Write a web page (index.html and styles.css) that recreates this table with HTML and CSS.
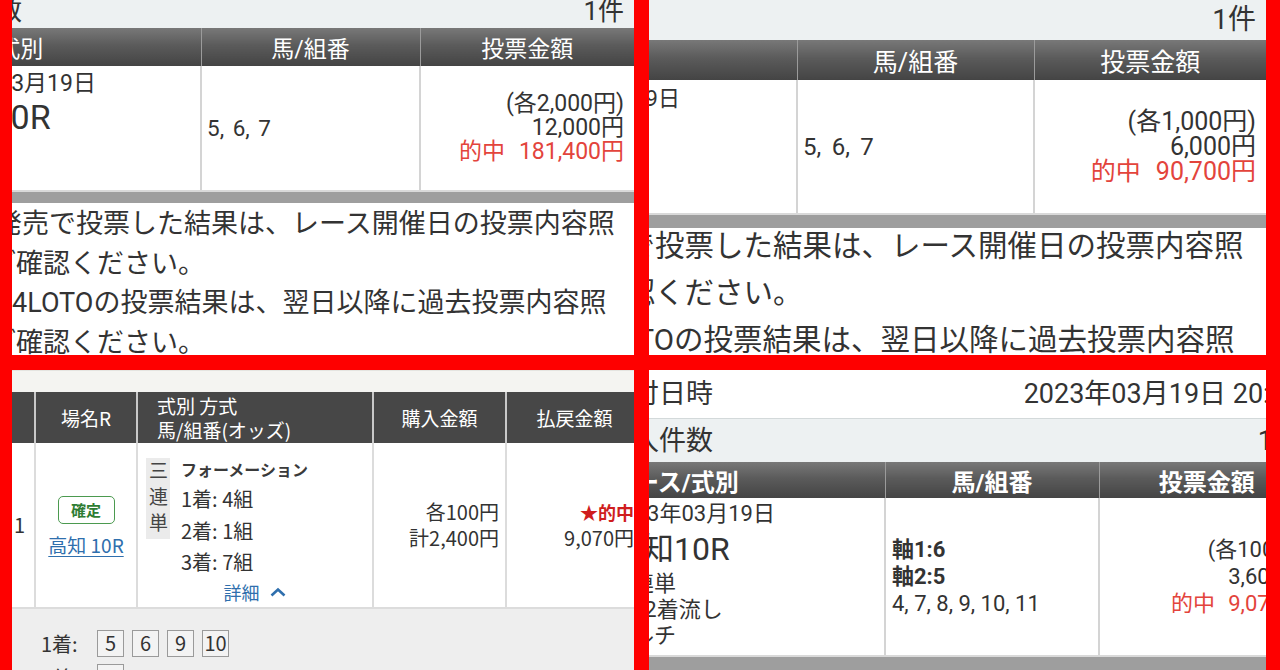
FILE: index.html
```html
<!DOCTYPE html>
<html lang="ja">
<head>
<meta charset="utf-8">
<title>投票結果</title>
<link rel="stylesheet" href="styles.css">
</head>
<body>
<main class="collage">

  <section class="shot">
    <div class="pat pat-a">
      <div class="info-row"><span>購入件数</span><span>1件</span></div>
      <table class="pat-table">
        <colgroup><col class="col-race"><col class="col-horse"><col class="col-amount"></colgroup>
        <thead><tr><th class="th-race">レース/式別</th><th>馬/組番</th><th>投票金額</th></tr></thead>
        <tbody><tr>
          <td class="race">
            <div class="date">2023年03月19日</div>
            <div class="venue">高知10R</div>
            <div class="kind">三連単</div>
            <div class="kind">ボックス</div>
          </td>
          <td class="horses">5, 6, 7</td>
          <td class="amount">(各2,000円)<br>12,000円<br><span class="hit">的中<span class="hit-pay">181,400円</span></span></td>
        </tr></tbody>
      </table>
      <div class="band"></div>
      <ul class="notes">
        <li>・前日発売で投票した結果は、レース開催日の投票内容照<br>会でご確認ください。</li>
        <li>・WIN5,4LOTOの投票結果は、翌日以降に過去投票内容照<br>会でご確認ください。</li>
      </ul>
    </div>
  </section>

  <section class="shot">
    <div class="pat pat-b">
      <div class="info-row"><span>購入件数</span><span>1件</span></div>
      <table class="pat-table">
        <colgroup><col class="col-race"><col class="col-horse"><col class="col-amount"></colgroup>
        <thead><tr><th class="th-race">レース/式別</th><th>馬/組番</th><th>投票金額</th></tr></thead>
        <tbody><tr>
          <td class="race">
            <div class="date">2023年03月19日</div>
            <div class="venue">高知10R</div>
            <div class="kind">三連単</div>
            <div class="kind">ボックス</div>
          </td>
          <td class="horses">5, 6, 7</td>
          <td class="amount">(各1,000円)<br>6,000円<br><span class="hit">的中<span class="hit-pay">90,700円</span></span></td>
        </tr></tbody>
      </table>
      <div class="band"></div>
      <ul class="notes">
        <li>・前日発売で投票した結果は、レース開催日の投票内容照<br>会でご確認ください。</li>
        <li>・WIN5,4LOTOの投票結果は、翌日以降に過去投票内容照<br>会でご確認ください。</li>
      </ul>
    </div>
  </section>

  <section class="shot">
    <div class="sp">
      <div class="sp-bar"></div>
      <table class="sp-table">
        <colgroup><col class="c0"><col class="c1"><col class="c2"><col class="c3"><col class="c4"></colgroup>
        <thead>
          <tr>
            <th></th>
            <th>場名R</th>
            <th class="th-left">式別 方式<br>馬/組番(オッズ)</th>
            <th>購入金額</th>
            <th>払戻金額</th>
          </tr>
        </thead>
        <tbody>
          <tr class="bet-row">
            <td class="no">1</td>
            <td class="place">
              <span class="badge">確定</span>
              <a class="race-link" href="#">高知 10R</a>
            </td>
            <td class="bet">
              <div class="bet-body">
                <div class="bet-type">三連単</div>
                <ul class="bet-lines">
                  <li class="method">フォーメーション</li>
                  <li>1着: 4組</li>
                  <li>2着: 1組</li>
                  <li>3着: 7組</li>
                </ul>
              </div>
              <div class="toggle">詳細<svg class="chev" viewBox="0 0 18 10" width="18" height="10"><path d="M2.5 8.5 9 2.5 15.5 8.5" fill="none" stroke="currentColor" stroke-width="2.6"/></svg></div>
            </td>
            <td class="money">各100円<br>計2,400円</td>
            <td class="money payout"><span class="hit-mark">★的中</span><br>9,070円</td>
          </tr>
          <tr class="detail-row">
            <td colspan="5">
              <div class="picks">
                <div class="pick-line"><span class="pick-label">1着:</span><span class="num">5</span><span class="num">6</span><span class="num">9</span><span class="num">10</span></div>
                <div class="pick-line"><span class="pick-label">2着:</span><span class="num">7</span></div>
                <div class="pick-line"><span class="pick-label">3着:</span><span class="num">1</span><span class="num">3</span><span class="num">5</span><span class="num">6</span><span class="num">9</span><span class="num">10</span><span class="num">11</span></div>
              </div>
            </td>
          </tr>
        </tbody>
      </table>
    </div>
  </section>

  <section class="shot">
    <div class="pat pat-d">
      <div class="info-row plain"><span>受付日時</span><span>2023年03月19日 20:15</span></div>
      <div class="info-row"><span>購入件数</span><span>1件</span></div>
      <table class="pat-table">
        <colgroup><col class="col-race"><col class="col-horse"><col class="col-amount"></colgroup>
        <thead><tr><th class="th-race">レース/式別</th><th>馬/組番</th><th>投票金額</th></tr></thead>
        <tbody><tr>
          <td class="race">
            <div class="date">2023年03月19日</div>
            <div class="venue">高知10R</div>
            <div class="kind">三連単</div>
            <div class="kind">1・2着流し</div>
            <div class="kind">マルチ</div>
          </td>
          <td class="horses"><b>軸1:6</b><br><b>軸2:5</b><br>4, 7, 8, 9, 10, 11</td>
          <td class="amount">(各100円)<br>3,600円<br><span class="hit">的中<span class="hit-pay">9,070円</span></span></td>
        </tr></tbody>
      </table>
      <div class="band"></div>
    </div>
  </section>

</main>
</body>
</html>
```

FILE: styles.css
```css
* { box-sizing: border-box; margin: 0; padding: 0; }

html, body { width: 1280px; height: 670px; overflow: hidden; }

body {
  background: #fe0000;
  font-family: Roboto, "Noto Sans CJK JP", sans-serif;
  color: #333;
}

.collage {
  display: grid;
  grid-template-columns: 622px 617px;
  grid-template-rows: 355px 300px;
  column-gap: 15px;
  row-gap: 15px;
  padding-left: 12px;
}

.shot { overflow: hidden; background: #fff; }

/* ---------- PAT style panels ---------- */
.pat { white-space: nowrap; }
.pat-a { width: 722px; margin-left: -100px; }
.pat-b { width: 765px; margin-left: -148px; }
.pat-d { width: 723px; margin-left: -58px; }

.info-row {
  display: flex;
  justify-content: space-between;
  background: #edf1f2;
}
.pat-a .info-row { height: 28px; font-size: 26px; line-height: 22px; padding: 0 10px 0 6px; }
.pat-b .info-row { height: 40px; font-size: 28px; line-height: 40px; padding: 0 10px 0 14px; }
.pat-d .info-row { height: 44px; font-size: 27px; line-height: 44px; padding: 0 14px; border-top: 1px solid #d3d9da; }
.pat-d .info-row.plain { height: 48px; line-height: 48px; background: #fff; border-top: 0; }

.pat-table { width: 100%; border-collapse: collapse; table-layout: fixed; }
.pat-table th {
  background: linear-gradient(#787878, #5b5b5b 45%, #444);
  color: #fff;
  font-weight: 400;
  text-align: center;
  padding: 0 14px;
  border-left: 1px solid #9b9b9b;
  overflow: hidden;
}
.pat-table th.th-race { text-align: left; border-left: 0; }
.pat-table td {
  border-left: 2px solid #d4d4d4;
  border-bottom: 2px solid #d9d9d9;
  vertical-align: middle;
  overflow: hidden;
}
.pat-table td.race { border-left: 0; vertical-align: top; }
.pat-table td.amount { text-align: right; }
.hit { color: #e3443c; }
.hit-pay { margin-left: 0.6em; }
.band { background: #9e9e9e; }
.notes { list-style: none; }
.notes li { text-indent: -1em; padding-left: 1em; }

/* panel A */
.pat-a .col-race { width: 289px; }
.pat-a .col-horse { width: 219px; }
.pat-a .col-amount { width: 214px; }
.pat-a th { height: 38px; font-size: 23px; }
.pat-a th.th-race { padding-left: 8px; }
.pat-a td.race { padding: 4px 0 0 11.5px; }
.pat-a .date { font-size: 23px; line-height: 28px; }
.pat-a .kind { font-size: 22px; line-height: 27px; }
.pat-a .venue { font-size: 34px; line-height: 38px; }
.pat-a td.horses { font-size: 22.5px; word-spacing: 3px; padding-left: 5px; }
.pat-a td.amount { font-size: 23px; line-height: 24px; padding-right: 10px; }
.pat-a .band { height: 11px; }
.pat-a .notes { font-size: 27px; line-height: 39.5px; padding: 2px 0 0 2px; }
.pat-a .notes li { padding-left: calc(1em - 6px); text-indent: calc(6px - 1em); }

/* panel B */
.pat-b .col-race { width: 296px; }
.pat-b .col-horse { width: 237px; }
.pat-b .col-amount { width: 232px; }
.pat-b th { height: 40px; font-size: 25px; }
.pat-b td.race { padding: 5px 0 4px 14px; }
.pat-b .date, .pat-b .kind { font-size: 22px; line-height: 28px; }
.pat-b .venue { font-size: 34px; line-height: 40px; }
.pat-b td.horses { font-size: 24px; word-spacing: 4.5px; padding-left: 5px; }
.pat-b td.amount { font-size: 25px; line-height: 25px; padding-right: 10px; }
.pat-b .band { height: 13px; }
.pat-b .notes { font-size: 29.5px; line-height: 47px; margin: -5px 0 0 -23px; }

/* panel D */
.pat-d .col-race { width: 294px; }
.pat-d .col-horse { width: 214px; }
.pat-d .col-amount { width: 215px; }
.pat-d th { height: 36px; font-size: 24px; font-weight: 700; }
.pat-d th.th-race { padding-left: 20px; }
.pat-d td.race { padding: 3px 0 6px 19px; }
.pat-d .date, .pat-d .kind { font-size: 22px; line-height: 26px; }
.pat-d .venue { font-size: 32px; line-height: 44px; }
.pat-d td.horses { font-size: 22px; line-height: 27px; padding-left: 6px; }
.pat-d td.amount { font-size: 22px; line-height: 27px; padding-right: 10px; }
.pat-d .band { height: 14px; }

/* ---------- SP style panel ---------- */
.sp { font-family: "Noto Sans CJK JP", sans-serif; color: #333; }
.sp-bar { height: 22px; background: #f4f4f1; border-top: 1px solid #e4e4e0; }

.sp-table {
  width: 637px;
  margin-left: -7px;
  border-collapse: collapse;
  table-layout: fixed;
}
.sp-table .c0 { width: 30px; }
.sp-table .c1 { width: 102px; }
.sp-table .c2 { width: 236px; }
.sp-table .c3 { width: 133px; }
.sp-table .c4 { width: 136px; }

.sp-table th {
  height: 51px;
  background: #474747;
  color: #fff;
  font-size: 19px;
  font-weight: 400;
  line-height: 24px;
  text-align: center;
  border-left: 2px solid #c9c9c9;
  white-space: nowrap;
}
.sp-table th:first-child { border-left: 0; }
.sp-table th.th-left { text-align: left; padding-left: 19px; }

.bet-row td {
  border-left: 2px solid #dcdcdc;
  border-bottom: 2px solid #dcdcdc;
  vertical-align: middle;
  white-space: nowrap;
}
.bet-row td.no { border-left: 0; text-align: center; font-size: 20px; }
.place { text-align: center; }
.badge {
  display: inline-block;
  width: 57px;
  height: 28px;
  border: 1.5px solid #4b9a4f;
  border-radius: 5px;
  color: #2f7d33;
  font-size: 15px;
  font-weight: 700;
  line-height: 25px;
  margin: 3px 0 9px;
}
.race-link {
  display: block;
  color: #2f6fad;
  font-size: 19px;
  line-height: 24px;
  text-decoration: underline;
  text-underline-offset: 3px;
}

td.bet { vertical-align: top; padding: 12px 0 0 8px; }
.bet-body { display: flex; align-items: flex-start; gap: 11px; }
.bet-type {
  writing-mode: vertical-rl;
  width: 24px;
  margin-top: 3px;
  padding-top: 3px;
  background: #ebebeb;
  color: #444;
  font-size: 19px;
  line-height: 24px;
  letter-spacing: 7px;
}
.bet-lines { list-style: none; font-size: 20px; line-height: 31.5px; }
.bet-lines .method { font-size: 16px; font-weight: 700; line-height: 28px; color: #3a3a3a; }
.toggle {
  display: flex;
  justify-content: center;
  align-items: center;
  gap: 9px;
  color: #2f6fad;
  font-size: 18px;
  line-height: 28px;
  padding-right: 8px;
  padding-bottom: 1px;
}
.chev { display: block; margin-top: 1px; }

td.money { text-align: right; font-size: 20px; line-height: 26px; padding-right: 6px; }
td.payout { padding-right: 8px; }
.hit-mark { color: #cf1d1d; font-weight: 700; font-size: 18px; }

.detail-row td { background: #eeeeee; padding: 21px 0 0 36px; }
.picks { display: flex; flex-direction: column; gap: 7px; }
.pick-line { display: flex; align-items: center; gap: 8px; }
.pick-label { width: 48px; font-size: 20px; line-height: 27px; }
.num {
  width: 27px;
  height: 27px;
  border: 1.5px solid #9a9a9a;
  background: #f3f3f3;
  font-size: 20px;
  line-height: 24px;
  text-align: center;
}
```
